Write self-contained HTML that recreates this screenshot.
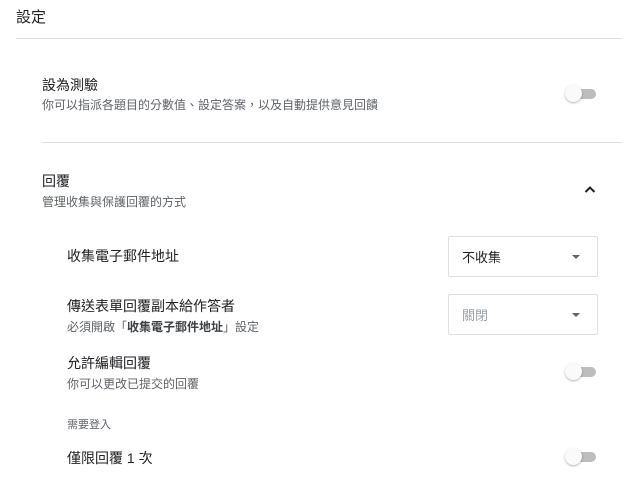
<!DOCTYPE html><html><head><meta charset="utf-8"><style>
body{margin:0;width:640px;height:484px;background:#fff;font-family:"Liberation Sans","Noto Sans CJK TC",sans-serif;color:#202124;position:relative;overflow:hidden}
.a{position:absolute;white-space:nowrap}
.t{font-size:14px;color:#202124}
.s{font-size:12px;color:#5f6368}
.line{position:absolute;height:1px;background:#e0e0e0}
.tg{position:absolute;width:34px;height:18px}
.tg .tr{position:absolute;left:6px;top:4px;width:25px;height:10px;border-radius:5px;background:#bdbdbd}
.tg .th{position:absolute;left:0;top:0;width:17px;height:17px;border-radius:50%;background:#fafafa;box-shadow:0 1px 2px rgba(0,0,0,.3)}
.dd{position:absolute;left:448px;width:148px;height:39px;border:1px solid #e0e0e0;border-radius:2px;font-size:13px}
.dd span{position:absolute;left:13px;top:10px}
.dd i{position:absolute;right:17px;top:18px;width:0;height:0;border-left:4px solid transparent;border-right:4px solid transparent;border-top:4px solid #5f6368}
</style></head><body>
<div class="a" style="left:16px;top:6px;font-size:15px">設定</div>
<div class="line" style="left:16px;top:38px;width:606px"></div>
<div class="a t" style="left:42px;top:75px">設為測驗</div>
<div class="a s" style="left:42px;top:96px">你可以指派各題目的分數值、設定答案，以及自動提供意見回饋</div>
<div class="tg" style="left:565px;top:85px"><div class="tr"></div><div class="th"></div></div>
<div class="line" style="left:42px;top:142px;width:580px"></div>
<div class="a t" style="left:42px;top:171px">回覆</div>
<div class="a s" style="left:42px;top:193px">管理收集與保護回覆的方式</div>
<svg class="a" style="left:583px;top:184px" width="14" height="10" viewBox="0 0 14 10"><path d="M2.5 8 L7 3.5 L11.5 8" fill="none" stroke="#202124" stroke-width="2"/></svg>
<div class="a t" style="left:67px;top:246px">收集電子郵件地址</div>
<div class="dd" style="top:236px"><span style="color:#202124">不收集</span><i></i></div>
<div class="a t" style="left:67px;top:296px">傳送表單回覆副本給作答者</div>
<div class="a s" style="left:67px;top:318px">必須開啟「<b style="color:#3c4043">收集電子郵件地址</b>」設定</div>
<div class="dd" style="top:294px"><span style="color:#9aa0a6">關閉</span><i></i></div>
<div class="a t" style="left:67px;top:353px">允許編輯回覆</div>
<div class="a s" style="left:67px;top:375px">你可以更改已提交的回覆</div>
<div class="tg" style="left:565px;top:363px"><div class="tr"></div><div class="th"></div></div>
<div class="a" style="left:67px;top:416px;font-size:11px;color:#5f6368">需要登入</div>
<div class="a t" style="left:67px;top:448px">僅限回覆 1 次</div>
<div class="tg" style="left:565px;top:448px"><div class="tr"></div><div class="th"></div></div>
</body></html>
